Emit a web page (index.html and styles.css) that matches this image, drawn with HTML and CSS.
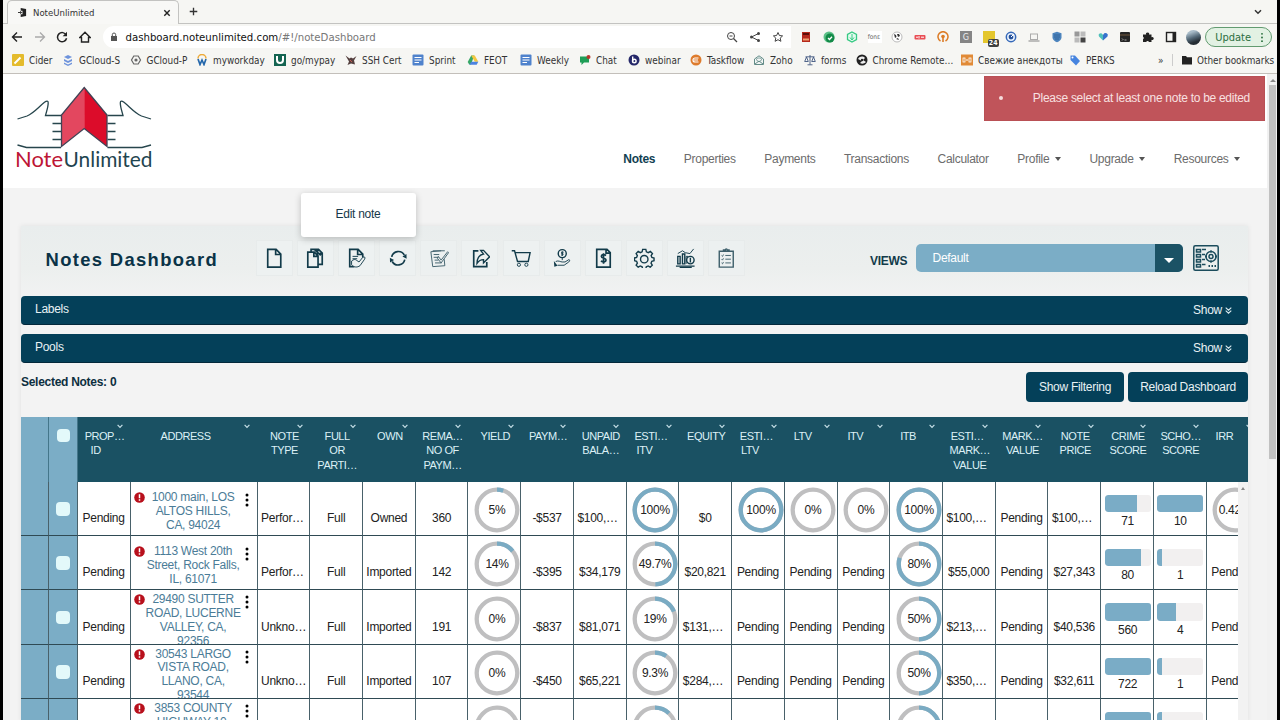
FILE: index.html
```html
<!DOCTYPE html>
<html lang="en">
<head>
<meta charset="utf-8">
<title>NoteUnlimited</title>
<link rel="stylesheet" href="styles.css">
</head>
<body>
<div class="window">
  <div class="tabstrip">
    <div class="tab">
      <svg class="tab-icon" viewBox="0 0 10 10"><path d="M3 0l6 1v8l-6 1V7h2V3H3z" fill="#222"/><path d="M0 5h4M2.5 3.5L4 5 2.5 6.5" stroke="#222" fill="none"/></svg>
      <span class="tab-title">NoteUnlimited</span>
      <svg class="tab-close" viewBox="0 0 8 8"><path d="M1.3 1.3l5.4 5.4M6.7 1.3L1.3 6.7" stroke="#222" stroke-width="1.4"/></svg>
    </div>
    <svg class="tab-add" viewBox="0 0 10 10"><path d="M5 .8v8.4M.8 5h8.4" stroke="#333" stroke-width="1.5"/></svg>
    <svg class="tab-menu" viewBox="0 0 8 6"><path d="M1 1.2l3 3 3-3" fill="none" stroke="#333" stroke-width="1.5"/></svg>
  </div>
  <div class="toolbar">
    <div class="navbtns">
      <svg viewBox="0 0 12 12"><path d="M11 6H1.5M6 1.5L1.5 6 6 10.500" fill="none" stroke="#222" stroke-width="1.4"/></svg>
      <svg viewBox="0 0 12 12"><path d="M1 6h9.500M6 1.500L10.500 6 6 10.500" fill="none" stroke="#aaa" stroke-width="1.300"/></svg>
      <svg viewBox="0 0 12 12"><path d="M10.200 4A4.600 4.600 0 1 0 10.600 7.300" fill="none" stroke="#222" stroke-width="1.500"/><path d="M11 .8v4.400H6.700z" fill="#222"/></svg>
      <svg viewBox="0 0 12 12"><path d="M.8 6.500L6 1.200l5.200 5.300H9.500V11h-7V6.500z" fill="none" stroke="#222" stroke-width="1.400"/></svg>
    </div>
    <div class="omnibox">
      <svg class="lock" viewBox="0 0 8 10"><rect x="1" y="4" width="6" height="5" fill="#555"/><path d="M2.300 4V2.700a1.700 1.700 0 0 1 3.400 0V4" fill="none" stroke="#555"/></svg>
      <span class="url">dashboard.noteunlimited.com<span class="path">/#!/noteDashboard</span></span>
    </div>
    <div class="ext">
      <svg viewBox="0 0 12 12"><circle cx="5" cy="5" r="3.500" fill="none" stroke="#444"/><path d="M7.500 7.500L11 11" stroke="#444" stroke-width="1.300"/><path d="M3.500 5h3" stroke="#444"/></svg>
      <svg viewBox="0 0 12 12"><path d="M9.500 2.500L2.500 6l7 3.500" fill="none" stroke="#444"/><circle cx="9.500" cy="2.500" r="1.500" fill="#444"/><circle cx="2.500" cy="6" r="1.500" fill="#444"/><circle cx="9.500" cy="9.500" r="1.500" fill="#444"/></svg>
      <svg viewBox="0 0 12 12"><path d="M6 1.500l1.400 3 3.200.4-2.400 2.200.7 3.200L6 8.700l-2.900 1.600.7-3.200-2.400-2.200 3.200-.4z" fill="none" stroke="#444"/></svg>
      <svg class="first" viewBox="0 0 12 12"><rect x="2" y="1" width="8" height="10" fill="#b5281c"/><path d="M3 3h6" stroke="#5c0f0a" stroke-width="2"/><path d="M3 8.500h6" stroke="#f0a070" stroke-width="2"/></svg>
      <svg viewBox="0 0 12 12"><circle cx="6" cy="6" r="5.500" fill="#5cc088"/><circle cx="7" cy="7" r="4.500" fill="#138a48"/><path d="M5 7l1.500 1.500L9 5.800" fill="none" stroke="#fff" stroke-width="1.300"/></svg>
      <svg viewBox="0 0 12 12"><path d="M6 1l4.500 2.500v5L6 11 1.500 8.500v-5z" fill="#e3fbef" stroke="#36c983" stroke-width="1.300"/><path d="M6 3v6M4 6.500L6 9l2-2.500" stroke="#36c983" fill="none"/></svg>
      <span class="font-ext">fonε</span>
      <svg viewBox="0 0 12 12"><circle cx="6" cy="6" r="5" fill="#fff" stroke="#bbb"/><path d="M3 3l2 1 .5 2-1.500 1zM6 3h2l1 2-2 1zM5 8l2-1 1 2z" fill="#333"/></svg>
      <svg viewBox="0 0 12 12"><rect x=".5" y="4" width="11" height="4.500" rx="1" fill="#e94e54"/><path d="M2 6.200h2M5 5v2.500M7 6.200h3" stroke="#fff"/></svg>
      <svg viewBox="0 0 12 12"><path d="M3.500 10a5 5 0 1 1 5 0" fill="none" stroke="#dc7b25" stroke-width="1.500"/><circle cx="6" cy="5.500" r="1.800" fill="#dc7b25"/><path d="M6 6v5" stroke="#dc7b25" stroke-width="1.600"/></svg>
      <span class="g-ext">G</span>
      <span class="note-ext"><span class="count">24</span></span>
      <svg viewBox="0 0 12 12"><circle cx="6" cy="6" r="4.700" fill="#e8f1fc" stroke="#3568b8" stroke-width="1.500"/><circle cx="6" cy="6" r="2.400" fill="#24509a"/><path d="M6 6l3-3" stroke="#fff"/></svg>
      <svg viewBox="0 0 12 12"><rect x="2.500" y="3" width="7" height="5.500" fill="none" stroke="#aaa"/><path d="M.5 10h11" stroke="#aaa" stroke-width="1.500"/></svg>
      <svg viewBox="0 0 12 12"><path d="M6 .8l4.500 1.500v4c0 2.500-2 4-4.500 5-2.500-1-4.500-2.500-4.500-5v-4z" fill="#4c84bd"/><path d="M3 4h6M3 6h6M4 8h4" stroke="#2d5f94" stroke-width=".8"/></svg>
      <svg viewBox="0 0 12 12"><path d="M.5.5h5v5h-5z" fill="#999"/><path d="M6.500.5h5v5h-5zM.5 6.500h5v5h-5z" fill="#bbb"/><path d="M6.500 6.500h5v5h-5z" fill="#444"/></svg>
      <svg viewBox="0 0 12 12"><path d="M6 9.500L2 5.500a2 2 0 0 1 3.500-2.300L6 4z" fill="#4fc0ba"/><path d="M6 9.500l4.500-4a2.200 2.200 0 0 0-4-2.300L6 4z" fill="#3672cc"/></svg>
      <svg viewBox="0 0 12 12"><rect x="1" y="1" width="10" height="10" rx="1" fill="#252525"/><path d="M1 4h10" stroke="#70573b"/><path d="M3 7.500l1 1-1 1M5.500 9h2" stroke="#ccc" fill="none" stroke-width=".8"/></svg>
      <svg viewBox="0 0 12 12"><path d="M1 3.500h3.200a1.500 1.500 0 1 1 2.800 0h2.500v2.700a1.500 1.500 0 1 1 0 2.600V11H7a1.500 1.500 0 0 0-2.800 0H1V8.300a1.500 1.500 0 0 0 0-2.600z" fill="#222"/></svg>
      <svg viewBox="0 0 12 12"><rect x="1.500" y="1.500" width="9" height="9" fill="none" stroke="#222" stroke-width="1.400"/><path d="M7.500 1h3.500v10H7.500z" fill="#222"/></svg>
      <span class="avatar"></span>
    </div>
    <div class="update">Update<svg viewBox="0 0 4 12"><circle cx="2" cy="2" r="1" fill="#246b38"/><circle cx="2" cy="6" r="1" fill="#246b38"/><circle cx="2" cy="10" r="1" fill="#246b38"/></svg></div>
  </div>
  <div class="bookmarks">
    <span><svg viewBox="0 0 12 12"><rect width="12" height="12" rx="1" fill="#e4bb2c"/><path d="M2.500 9.500l6-6" stroke="#fff" stroke-width="2"/></svg>Cider</span>
    <span><svg viewBox="0 0 12 12"><path d="M6 1l4 2-4 2-4-2zM2 5l4 2 4-2v2L6 9 2 7zM2 8.500l4 2 4-2V10l-4 2-4-2z" fill="#6e93dc"/></svg>GCloud-S</span>
    <span><svg viewBox="0 0 12 12"><path d="M3.800 2h4.400l2.300 4-2.300 4H3.800L1.500 6z" fill="none" stroke="#666" stroke-width="1.200"/><circle cx="6" cy="6" r="1.600" fill="#666"/></svg>GCloud-P</span>
    <span><svg viewBox="0 0 12 12"><path d="M2 4.500a4 4 0 0 1 8 0" fill="none" stroke="#edaa38" stroke-width="1.500"/><path d="M2 5l2 5.500L6 6l2 4.500L10 5" fill="none" stroke="#2467ab" stroke-width="1.700"/></svg>myworkday</span>
    <span><svg viewBox="0 0 12 12"><rect width="12" height="12" fill="#146451"/><path d="M3 2v4a3 3 0 0 0 6 0V2" fill="none" stroke="#fff" stroke-width="2"/></svg>go/mypay</span>
    <span><svg viewBox="0 0 12 12"><path d="M.5 1.500l4 3 1.500-1 2 1L11.500 2 9 6.500l1 4-4-1-3.500 1.500L4 7.500z" fill="#55403f"/><path d="M5 6l2 2" stroke="#c45a50"/></svg>SSH Cert</span>
    <span><svg viewBox="0 0 12 12"><rect x=".5" y=".5" width="11" height="11" rx="1" fill="#4f82cc"/><path d="M2.500 3.500h7M2.500 6h7M2.500 8.500h4.500" stroke="#fff" stroke-width="1.200"/></svg>Sprint</span>
    <span><svg viewBox="0 0 12 12"><path d="M4.200 1.500h3L4 10.500H2.200L.7 8z" fill="#36a766"/><path d="M4.200 1.500h3.600l3.500 6.200H7.800z" fill="#f4c63e"/><path d="M4.300 7.700h7l-1.600 3H2.400z" fill="#4d83e0"/></svg>FEOT</span>
    <span><svg viewBox="0 0 12 12"><rect x=".5" y=".5" width="11" height="11" rx="1" fill="#4f82cc"/><path d="M2.500 3.500h7M2.500 6h7M2.500 8.500h4.500" stroke="#fff" stroke-width="1.200"/></svg>Weekly</span>
    <span><svg viewBox="0 0 12 12"><path d="M1 2.500h9v6H5L2.500 11V8.500H1z" fill="#1f9e57"/><circle cx="9.500" cy="3" r="2" fill="#b4382c"/></svg>Chat</span>
    <span><svg viewBox="0 0 12 12"><circle cx="6" cy="6" r="5.500" fill="#26296a"/><path d="M4.700 2.500v5" stroke="#fff" stroke-width="1.400"/><circle cx="6.300" cy="7" r="1.800" fill="none" stroke="#fff" stroke-width="1.400"/></svg>webinar</span>
    <span><svg viewBox="0 0 12 12"><circle cx="6" cy="6" r="5.500" fill="#de7b2c"/><path d="M8.500 4H5a2 2 0 0 0 0 4h3.500M4 6h4" stroke="#fff" fill="none" stroke-width="1.200"/></svg>Taskflow</span>
    <span><svg viewBox="0 0 12 12"><path d="M1.500 5L6 1.800 10.500 5v5.500h-9zM2 10l4-3 4 3" fill="#f3f6f5" stroke="#638c88" stroke-width="1"/><path d="M3 5.500c2-2 4-2 6 0L6 8z" fill="none" stroke="#638c88" stroke-width=".8"/></svg>Zoho</span>
    <span><svg viewBox="0 0 12 12"><path d="M6 1v9.500M3.500 10.800h5M1.500 2.800h9M2.500 3L.7 7.500h3.600zM9.500 3L7.700 7.500h3.600z" fill="none" stroke="#40567f" stroke-width=".9"/></svg>forms</span>
    <span><svg viewBox="0 0 12 12"><circle cx="6" cy="6" r="5.500" fill="#222"/><path d="M2 5c2-3 5-3 7-1L7 6l3 2c-2 2-4 2-6 1l2-2z" fill="#eee"/><circle cx="6" cy="6" r="1.200" fill="#222"/></svg>Chrome Remote…</span>
    <span><svg viewBox="0 0 12 12"><rect y=".5" width="12" height="11" fill="#e18a36"/><path d="M5 6h2" stroke="#fff"/><rect x="2" y="4" width="2" height="4" fill="none" stroke="#fff" stroke-width=".8"/><rect x="8" y="4" width="2" height="4" fill="none" stroke="#fff" stroke-width=".8"/></svg>Свежие анекдоты</span>
    <span><svg viewBox="0 0 12 12"><path d="M1.500 1.500H6l5 5.500-4 4.500L1.500 6z" fill="#4684df"/><circle cx="3.500" cy="3.500" r="1" fill="#fff"/></svg>PERKS</span>
    <span class="more">»</span>
    <span class="other"><svg viewBox="0 0 12 12"><path d="M1 2h4l1 1.300h5V10.500H1z" fill="#222"/></svg>Other bookmarks</span>
  </div>

  <div class="viewport">
    <div class="page">
      <header class="site-header">
        <svg class="logo" viewBox="0 0 138 86" role="img" aria-label="NoteUnlimited">
          <g fill="none" stroke="#27464d" stroke-width="1.300">
            <path d="M1.500 33l9.500-3c7-3 11-8.500 17.500-13.700 2-1.500 3.700-2 3.700.5 0 4.500-1.700 8.700-2.700 12.700H45M36.500 37.500H45M36.500 45.500H45M36.500 53.500H45M1.500 59l9 2.500H45"/>
            <path d="M135 33l-9.500-3c-7-3-11-8.500-17.500-13.700-2-1.500-3.700-2-3.700.5 0 4.500 1.700 8.700 2.700 12.700H91.500M99.500 37.500H91.500M99.500 45.500H91.500M99.500 53.500H91.500M135 59l-9 2.500H91.500"/>
          </g>
          <path d="M68.200 1.500v41L45.500 60.500V29z" fill="#e3475f"/>
          <path d="M68.200 1.500v41l22.800 18V29z" fill="#dc0c2a"/>
          <path d="M68.200 1.500L91 29v31.500l-22.800-18-22.700 18V29z" fill="none" stroke="#414355" stroke-width="1.300"/>
          <text x="-1" y="81" class="logo-text logo-note" textLength="48" lengthAdjust="spacingAndGlyphs">Note</text>
          <text x="47.500" y="81" class="logo-text logo-unl" textLength="89" lengthAdjust="spacingAndGlyphs">Unlimited</text>
        </svg>
        <nav class="site-nav">
          <a class="active">Notes</a><a>Properties</a><a>Payments</a><a>Transactions</a><a>Calculator</a><a class="drop">Profile</a><a class="drop">Upgrade</a><a class="drop">Resources</a>
        </nav>
        <div class="alert"><i></i>Please select at least one note to be edited</div>
      </header>

      <main class="card">
        <div class="card-head">
          <h1>Notes Dashboard</h1>
          <div class="actions">
            <button><svg viewBox="0 0 22 22"><path d="M4 1.500h9l5 5v14H4zM12.500 2v5H18"/></svg></button>
            <button><svg viewBox="0 0 22 22"><path d="M3 4.500h7l4 4v12H3zM9.500 5v4H14M6.500 4V1.500h8l4 4v12H14.500M10.500 2l6.500 6M13.500 2v4h5" /></svg></button>
            <button><svg viewBox="0 0 22 22"><path d="M9 20H4V1.500h9l5 5v4M12.500 2v5H18"/><path class="thin hand" d="M7 9h6M7 11.500h5M6 14c2-2 4-2 5-1l3 2 4-5c2-1 3 0 2 2l-5 7c-3 2-6 2-9-1z"/></svg></button>
            <button><svg viewBox="0 0 22 22"><path d="M4 9.500a7.300 7.300 0 0 1 13.500-2M18 12.500a7.300 7.300 0 0 1-13.500 2"/><path class="fill" d="M19.800 6.500l.2 5-4.500-2.500zM2.200 15.500l-.2-5L6.500 13z"/></svg></button>
            <button class="muted"><svg viewBox="0 0 22 22"><path class="thin" d="M13 3L2 4l2 16 13-1-.7-7M4 3h13M5 7h6M5 10h5M6 13h4M6.500 16h7M10 9l3 4 7-9 1 1-8 11-4-5z"/></svg></button>
            <button><svg viewBox="0 0 22 22"><path d="M9 3H4v17h14v-5M4 18V3"/><path class="mid" d="M11.500 2.500h3l6.500 7-6.500 6.500v-3.500c-3 0-5 1-7 4 0-5.500 2-9 7-10z"/></svg></button>
            <button><svg viewBox="0 0 22 22"><path class="mid" d="M.8 3h3L7 14.500h11.500L20.500 5H4.500"/><circle class="thin" cx="8.500" cy="18" r="1.700"/><circle class="thin" cx="16.500" cy="18" r="1.700"/></svg></button>
            <button><svg viewBox="0 0 22 22"><circle class="mid" cx="11" cy="6" r="4.300"/><path class="thin" d="M12.500 4.500h-2.200v1.500h1.500v1.500H9.800M11 3.500v5M11 10v3M4 14.500c3-1.500 5 .5 7 .5h3l4-2.500c1.500 0 1 1.500 0 2.500l-5 3.500H6"/><path class="fill" d="M2 14l4 5-3.500 1.200z"/></svg></button>
            <button><svg viewBox="0 0 22 22"><path d="M4 1.500h11l3.500 3.500v15.500H4zM14 2v3.500h4"/><path d="M14 8c-2-1.500-5-1-5 1 0 2.500 5 1.500 5 4 0 2-3 2.500-5.500 1M11.300 5.500v11.500"/></svg></button>
            <button><svg viewBox="0 0 22 22"><path class="mid" d="M9.300 1.500h3.400l.6 2.600 2 .9 2.300-1.400 2.200 2.300-1.400 2.200.8 2 2.300.6v3l-2.400.6-.8 1.900 1.300 2.200-2.200 2.200-2.200-1.300-2 .9-.6 2.300H9.300l-.6-2.300-2-.9-2.200 1.300-2.200-2.200 1.300-2.200-.8-1.900-2.300-.6v-3l2.300-.6.8-2L2.300 5.900l2.200-2.300L6.800 5l1.900-.9z"/><circle class="mid" cx="11" cy="12" r="4"/></svg></button>
            <button><svg viewBox="0 0 22 22"><path class="mid" d="M1 19.500h20M3 17V9h2.500v8zM8 17V6.500h2.500V17z"/><path class="thin" d="M3 6l5-3 3 2 5 1 4-5M12 17V9h2"/><circle class="mid" cx="16.500" cy="13" r="4"/><path class="mid" d="M16.500 10.500v5M5 21h13"/></svg></button>
            <button class="muted"><svg viewBox="0 0 22 22"><path class="mid" d="M3.500 3.500h15v17h-15zM8 3.500V2h2a1 1 0 0 1 2 0h2v1.500z"/><path class="thin" d="M6 8l1 1 1-2M10 8h6M6 12l1 1 1-2M10 12h6M6 16l1 1 1-2M10 16h6"/></svg></button>
          </div>
          <span class="views">VIEWS</span>
          <div class="select"><span>Default</span><b></b></div>
          <svg class="settings" viewBox="0 0 26 26"><rect x=".8" y=".8" width="24.400" height="24.400" rx="1.500"/><path d="M3.500 4.500h4v2.500h-4zM3.500 9.500h4V12h-4zM3.500 14.500h4V17h-4zM3.500 19.500h4V22h-4zM9 4.500h4M9 9.500h3M9 14.500h3M9 19.500h3.500"/><circle cx="18" cy="11.500" r="5"/><circle cx="18" cy="11.500" r="2"/><path d="M18 5.500v2M18 15.500v2M12 11.500h2M22 11.500h2M15.500 21h1.500M18.500 21H20M21.500 21H23" stroke-width="2"/></svg>
          <div class="tooltip">Edit note</div>
        </div>
        <div class="bar"><span>Labels</span><span class="show">Show <svg viewBox="0 0 7 7"><path d="M.7.7l2.800 2.500L6.300.7M.7 3.700l2.800 2.500 2.800-2.500"/></svg></span></div>
        <div class="bar"><span>Pools</span><span class="show">Show <svg viewBox="0 0 7 7"><path d="M.7.7l2.800 2.500L6.300.7M.7 3.700l2.800 2.500 2.800-2.500"/></svg></span></div>
        <div class="subhead">
          <b>Selected Notes: 0</b>
          <div class="subhead-btns"><span class="btn filter">Show Filtering</span><span class="btn reload">Reload Dashboard</span></div>
        </div>
        <div class="grid-head row" id="head"></div>
        <div class="grid-body"><div class="rows" id="rows"></div><div class="inner-scroll"><i></i></div></div>
      </main>
    </div>
    <div class="scroll"><i></i><b></b></div>
  </div>
</div>
<script src="script.js"></script>
</body>
</html>
```

FILE: styles.css
```css
* { box-sizing: border-box; }
body { margin: 0; background: #000; font-family: "Liberation Sans", Arial, sans-serif; font-size: 12px; letter-spacing: -.28px; color: #222; }
.window { width: 1274px; height: 720px; margin-left: 3px; overflow: hidden; display: flex; flex-direction: column; background: #f3f3f3; }

/* browser chrome */
.tabstrip, .toolbar, .bookmarks { font-family: "DejaVu Sans Condensed", "DejaVu Sans", sans-serif; font-stretch: condensed; letter-spacing: 0; background: #f6f6f3; flex: none; }
.tabstrip { height: 24px; display: flex; align-items: center; border-bottom: 1px solid #c3c3c1; }
.tab { margin-left: 4px; width: 172px; height: 24px; margin-bottom: -1px; background: #f8f8f6; border: 1px solid #c3c3c1; border-bottom: 0; border-radius: 5px 5px 0 0; display: flex; align-items: center; padding: 0 7px 0 10px; font-size: 9.500px; color: #333; }
.tab-icon { width: 9px; height: 9px; margin-right: 6px; }
.tab-title { flex: 1; }
.tab-close { width: 8px; height: 8px; }
.tab-add { width: 9px; height: 9px; margin-left: 10px; }
.tab-menu { width: 8px; height: 6px; margin-left: auto; margin-right: 15px; }
.toolbar { height: 26px; display: flex; align-items: center; }
.navbtns { display: flex; gap: 10.7px; margin-left: 8px; width: 92px; flex: none; }
.navbtns svg { width: 12px; height: 12px; flex: none; }
.omnibox { height: 22px; width: 618px; flex: none; background: #fff; border-radius: 11px 0 0 11px; display: flex; align-items: center; padding-left: 7px; }
.lock { width: 8px; height: 10px; margin-right: 7.500px; }
.url { font-size: 11.300px; color: #111; white-space: nowrap; }
.path { color: #777; }
.ext { display: flex; align-items: center; flex: none; height: 22px; background: linear-gradient(90deg, #fff 70px, #f6f6f3 70px); }
.ext > * { width: 12px; height: 12px; margin: 0 5.4px; flex: none; }
.ext .first { margin-left: 11px; }
.ext .font-ext { width: 14px; margin: 0 4.400px; font-size: 6.500px; line-height: 12px; background: #fff; color: #666; }
.g-ext { background: #858585; color: #eee; font-size: 9px; line-height: 12px; text-align: center; }
.note-ext { background: #e4c62d; display: flex; align-items: flex-end; justify-content: flex-end; }
.count { background: #404040; color: #fff; font-size: 7px; font-weight: bold; line-height: 8px; padding: 0 1px; border-radius: 2px; margin: 0 -4px -4px 0; }
.ext .avatar { width: 15px; height: 15px; margin: 0 4px; border-radius: 50%; background: linear-gradient(160deg, #a9bcc9 20%, #536877 50%, #252d34 75%); }
.update { width: 67px; height: 20px; flex: none; margin-left: auto; margin-right: 5px; border: 1px solid #629b70; border-radius: 10px; background: #e2f1e3; color: #2b6e3e; font-size: 11px; display: flex; align-items: center; justify-content: space-between; padding: 0 7px 0 9px; }
.update svg { width: 4px; height: 11px; }
.bookmarks { height: 24px; display: grid; grid-template-columns: 50px 67.500px 66.500px 78px 71px 67px 55px 53px 59px 49px 62px 63px 51px 51.500px 105.500px 108px 87px 13px 110px; padding-left: 9px; padding-bottom: 3px; border-bottom: 1px solid #c3bfba; font-size: 9.900px; color: #333; align-items: center; }
.bookmarks span { display: flex; align-items: center; white-space: nowrap; }
.bookmarks svg { width: 12px; height: 12px; margin-right: 5px; flex: none; }
.bookmarks .more { padding-left: 2px; font-size: 10px; }
.bookmarks .other { border-left: 1px solid #ccc; margin-left: 3px; padding-left: 8px; }
.bookmarks .other svg { margin-right: 4px; }

/* page frame */
.viewport { flex: 1; display: flex; min-height: 0; }
.page { width: 1264px; flex: none; }
.scroll { flex: 1; background: #f1f1f1; padding: 5px 1px 0 2px; display: flex; flex-direction: column; align-items: center; }
.scroll i { border: 3px solid transparent; border-top: 0; border-bottom: 3px solid #888; margin-bottom: 3px; }
.scroll b { width: 7px; height: 374px; background: #c1c1c1; }

.site-header { position: relative; height: 114px; background: #fff; display: flex; }
.logo { width: 138px; height: 86px; margin: 12px 0 0 13px; overflow: visible; }
.logo-text { font-family: Lato, sans-serif; font-size: 22px; letter-spacing: 0; }
.logo-note { fill: #bd1535; }
.logo-unl { fill: #1f4550; }
.site-nav { margin-left: auto; margin-right: 27px; padding-top: 77.500px; display: flex; gap: 28.600px; color: #6c6c6c; line-height: 14px; }
.site-nav .active { color: #123f52; font-weight: bold; }
.drop::after { content: ""; display: inline-block; border: 3.500px solid transparent; border-top: 4px solid #555; border-bottom: 0; margin-left: 5.500px; vertical-align: 2px; }
.alert { position: absolute; top: 2px; right: 2px; width: 281px; height: 45px; background: #c0545a; border: 1px solid #b95055; color: #f8e1e1; display: flex; align-items: center; justify-content: flex-end; padding: 0 14px 1px 0; white-space: nowrap; }
.alert i { width: 4px; height: 4px; border-radius: 50%; background: #f5dcdc; margin-right: auto; margin-left: 14px; }

.card { margin: 38px 0 0 18px; width: 1227px; box-shadow: 0 0 5px rgba(0, 0, 0, .08); }
.card-head { position: relative; height: 70px; background: linear-gradient(#e9eded, #ecefee 60%, #f1f2f2); display: flex; }
h1 { margin: 22.500px 0 0 24.500px; width: 210.500px; font-size: 18.400px; line-height: 22px; letter-spacing: 1.350px; color: #0a3347; white-space: nowrap; }
.actions { display: flex; gap: 4.100px; margin-top: 14px; }
.actions button { width: 37px; height: 36px; padding: 0; border: 1px solid #e7ebeb; background: #edf1f1; display: flex; align-items: center; justify-content: center; }
.actions svg { width: 20.500px; height: 20.500px; fill: none; stroke: #123b4a; stroke-width: 1.800; }
.actions .thin { stroke-width: 1; }
.actions .mid { stroke-width: 1.500; }
.actions .hand { fill: #eef2f2; }
.actions .fill { fill: #123b4a; stroke: none; }
.actions .muted { opacity: .8; }
.views { margin-left: auto; font-weight: bold; line-height: 14px; padding-top: 28px; width: 46px; color: #123b4a; }
.select { width: 267px; height: 28px; margin-top: 18px; background: #7badc6; border-radius: 5px; overflow: hidden; color: #fff; display: flex; justify-content: space-between; }
.select span { padding-left: 16.500px; line-height: 28px; }
.select b { width: 28px; background: #1b5265; display: flex; align-items: center; justify-content: center; }
.select b::after { content: ""; border: 5px solid transparent; border-top-color: #fff; border-bottom: 0; margin-top: 4px; }
.settings { width: 26px; height: 26px; margin: 19px 29px 0 10px; fill: none; stroke: #1b4c5c; stroke-width: 1.500; }
.tooltip { position: absolute; left: 279.500px; top: -33px; width: 115px; height: 44px; background: #fff; border-radius: 3px; box-shadow: 0 2px 7px rgba(0, 0, 0, .22); color: #17384a; text-align: center; line-height: 43px; }

.bar { height: 29px; margin-bottom: 9px; background: #044059; border-bottom: 1px solid #03283b; border-radius: 4px; color: #e9f2f5; display: flex; justify-content: space-between; padding: 0 16px 0 14px; line-height: 27px; }
.show { padding-top: 1px; }
.show svg { width: 7px; height: 7px; fill: none; stroke: #dcebf0; stroke-width: 1.100; }
.subhead { height: 45px; display: flex; justify-content: space-between; color: #0d2f40; line-height: 20px; }
.subhead-btns { display: flex; gap: 4px; }
.btn { height: 30px; line-height: 30px; background: #044059; color: #e9f2f5; border-radius: 4px; text-align: center; white-space: nowrap; }
.filter { width: 98px; }
.reload { width: 120px; }

/* notes table */
.row { display: grid; grid-template-columns: 28.300px 28.300px 53px 127px repeat(19, 52.720px); }
.grid-head { height: 64.500px; overflow: hidden; background: #1a5163; color: #dcf0f6; font-size: 11px; letter-spacing: -.45px; line-height: 14.500px; }
.grid-head > div { position: relative; text-align: center; padding: 11.500px 0 0 1px; white-space: nowrap; }
.grid-head p { margin: 0; }
.grid-head .lead { padding-right: 18px; }
.grid-head .semi { padding-right: 5px; }
.chev { position: absolute; right: 7.500px; top: 7px; width: 6px; height: 5px; fill: none; stroke: #c7e0e8; }
.pick { background: #7badc6; }
.grid-head .pick { border-right: 1px solid #44768a; }
.check { width: 13.500px; height: 13.500px; border-radius: 4px; background: #e3f9fa; margin: 0 auto; }
.grid-body { display: flex; height: 240px; }
.rows { width: 1217px; overflow: hidden; background: #fff; }
.inner-scroll { flex: 1; background: #f2f2f2; padding: 5px 0 0 3px; }
.inner-scroll i { display: block; width: 0; border: 2.500px solid transparent; border-top: 0; border-bottom: 3px solid #888; }
.rows .row { height: 54.400px; }
.rows .row > div { border-right: 1px solid #49616a; border-bottom: 1px solid #2f4a54; overflow: hidden; white-space: nowrap; min-width: 0; }
.rows .pick .check { margin-top: 20.500px; }
.txt { text-align: center; padding-top: 29.500px; line-height: 14px; }
.txt.cut { text-align: left; padding-left: 3.500px; }
.addr { display: flex; color: #4b7c97; line-height: 13.800px; padding-top: 9.500px; }
.addr.long { padding-top: 3px; }
.addr p { margin: 0 0 0 -3px; flex: 1; text-align: center; }
.warn { width: 11px; height: 11px; margin: 1px 0 0 3px; }
.dots { width: 4px; height: 14px; margin: 2px 8px 0 0; }
.ring { padding: 5.500px 0 0 5.500px; }
.ring svg { width: 46px; height: 46px; display: block; }
.ring text { font-size: 12px; fill: #222; text-anchor: middle; }
.score { padding: 13px 0 0 3.500px; text-align: center; }
.meter { width: 46px; height: 17.500px; background: #f2f0f0; border-radius: 3px; overflow: hidden; }
.meter i { display: block; height: 100%; background: #7aacc6; border-radius: 3px 0 0 3px; }
.score span { display: block; width: 46px; line-height: 14px; padding-top: 2px; }
```

FILE: script.js
```js
const heads = [
  ["PROP…", "-ID"], ["-ADDRESS"], ["NOTE", "TYPE"], ["FULL", "OR", "PARTI…"], ["OWN"],
  ["REMA…", "NO OF", "PAYM…"], ["YIELD"], ["PAYM…"], ["UNPAID", "BALA…"], ["~ESTI…", "-ITV"],
  ["EQUITY"], ["~ESTI…", "-LTV"], ["-LTV"], ["-ITV"], ["-ITB"], ["~ESTI…", "MARK…", "VALUE"],
  ["MARK…", "VALUE"], ["NOTE", "PRICE"], ["CRIME", "SCORE"], ["SCHO…", "SCORE"], ["-IRR"]
];
const P = "Pending";
const ring = (label, pct) => ({ ring: label, pct });
const score = (label, pct) => ({ score: label, pct });
const notes = [
  [["1000 main, LOS", "ALTOS HILLS,", "CA, 94024"], "Perfor…", "Full", "Owned", "360", ring("5%", 5), "-$537", "$100,…", ring("100%", 100), "$0", ring("100%", 100), ring("0%", 0), ring("0%", 0), ring("100%", 100), "$100,…", P, "$100,…", score(71, 71), score(10, 100), ring("0.42%", 0)],
  [["1113 West 20th", "Street, Rock Falls,", "IL, 61071"], "Perfor…", "Full", "Imported", "142", ring("14%", 14), "-$395", "$34,179", ring("49.7%", 49.7), "$20,821", P, P, P, ring("80%", 80), "$55,000", P, "$27,343", score(80, 80), score(1, 10), P],
  [["29490 SUTTER", "ROAD, LUCERNE", "VALLEY, CA,", "92356"], "Unkno…", "Full", "Imported", "191", ring("0%", 0), "-$837", "$81,071", ring("19%", 19), "$131,…", P, P, P, ring("50%", 50), "$213,…", P, "$40,536", score(560, 100), score(4, 40), P],
  [["30543 LARGO", "VISTA ROAD,", "LLANO, CA,", "93544"], "Unkno…", "Full", "Imported", "107", ring("0%", 0), "-$450", "$65,221", ring("9.3%", 9.3), "$284,…", P, P, P, ring("50%", 50), "$350,…", P, "$32,611", score(722, 100), score(1, 10), P],
  [["3853 COUNTY", "HIGHWAY 10,", "", ""], "", "", "", "", ring("", 0), "", "", ring("", 12), "", "", "", "", ring("", 50), "", "", "", score("", 100), score("", 10), ""]
];

const headLine = t => {
  const cls = t[0] === "-" ? "lead" : t[0] === "~" ? "semi" : "";
  return `<p class="${cls}">${cls ? t.slice(1) : t}</p>`;
};
document.getElementById("head").innerHTML =
  `<div class="pick"></div><div class="pick"><div class="check"></div></div>` +
  heads.map(h => `<div>${h.map(headLine).join("")}<svg class="chev" viewBox="0 0 5 4"><path d="M.5.7l2 2 2-2"/></svg></div>`).join("");

function cell(v) {
  if (Array.isArray(v)) {
    return `<div class="addr${v.length > 3 ? " long" : ""}"><svg class="warn" viewBox="0 0 11 11"><circle cx="5.500" cy="5.500" r="5.300" fill="#b8101c"/><path d="M5.500 2.200v4M5.500 7.300v1.500" stroke="#fff" stroke-width="1.500"/></svg><p>${v.join("<br>")}</p><svg class="dots" viewBox="0 0 4 14"><circle cx="2" cy="2" r="1.500"/><circle cx="2" cy="7" r="1.500"/><circle cx="2" cy="12" r="1.500"/></svg></div>`;
  }
  if (v.ring !== undefined) {
    const arc = v.pct ? `<circle cx="23" cy="23" r="20.300" fill="none" stroke="#7aabc3" stroke-width="4.300" pathLength="100" stroke-dasharray="${v.pct} 100" transform="rotate(-90 23 23)"/>` : "";
    return `<div class="ring"><svg viewBox="0 0 46 46"><circle cx="23" cy="23" r="20.300" fill="none" stroke="#bfbfc0" stroke-width="4.300"/>${arc}<text x="23" y="27">${v.ring}</text></svg></div>`;
  }
  if (v.score !== undefined) {
    return `<div class="score"><div class="meter"><i style="width:${v.pct}%"></i></div><span>${v.score}</span></div>`;
  }
  return `<div class="txt${v.endsWith("…") ? " cut" : ""}">${v}</div>`;
}
document.getElementById("rows").innerHTML = notes.map(n =>
  `<div class="row"><div class="pick"></div><div class="pick"><div class="check"></div></div>${cell(n === notes[4] ? "" : P)}${n.map(cell).join("")}</div>`).join("");
```
